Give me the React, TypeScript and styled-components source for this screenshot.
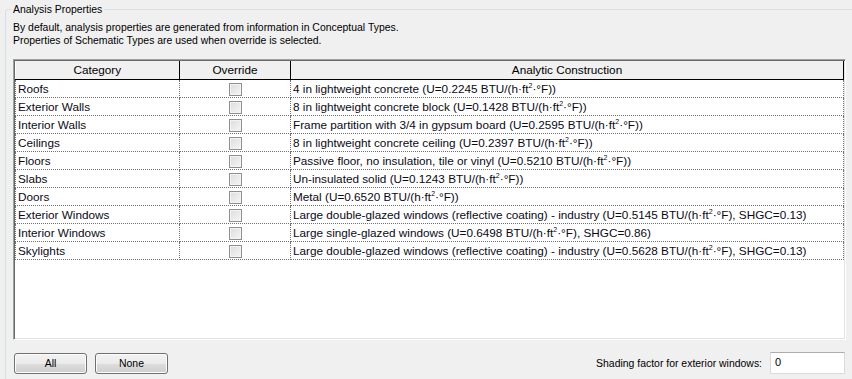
import styled, { createGlobalStyle } from "styled-components"

const FONT = `"Liberation Sans", Arial, sans-serif`

const GlobalStyle = createGlobalStyle`
	html, body {
		margin: 0;
		padding: 0;
		background: #f0f0f0;
		overflow: hidden;
	}
	body {
		font-family: ${FONT};
		font-size: 10.45px;
		color: #000;
	}
`

const Page = styled.div`
	width: 852px;
	height: 379px;
	padding-top: 3px;
	box-sizing: border-box;
	overflow: hidden;
`

const GroupBox = styled.fieldset`
	margin: 0 -20px 0 5px;
	padding: 0 0 0 7px;
	border: 1px solid #d5dfe5;
	border-radius: 3px;
	height: 420px;
	box-sizing: border-box;
`

const Legend = styled.legend`
	padding: 0 2px;
	margin-left: -2px;
	line-height: 13px;
	font-size: 10.45px;
`

const Description = styled.div`
	margin-top: 5px;
	line-height: 13px;
`

const Frame = styled.div`
	margin-top: 12px;
	width: 833px;
	height: 281px;
	box-sizing: border-box;
	background: #fff;
	border-top: 1px solid #a0a0a0;
	border-left: 1px solid #a0a0a0;
	border-right: 1px solid #fff;
	border-bottom: 1px solid #fff;
	box-shadow: inset 1px 1px 0 #696969, inset -1px -1px 0 #e3e3e3;
	padding: 1px;
`

const Grid = styled.table`
	border-collapse: collapse;
	table-layout: fixed;
	width: 828px;
	font-family: ${FONT};
	font-size: 11.75px;
`

const HeadCell = styled.th<{ $w: number }>`
	width: ${({ $w }) => $w}px;
	height: 18px;
	padding: 0;
	background: #f0f0f0;
	font-weight: normal;
	text-align: center;
	border-right: 1px solid #000;
	border-bottom: 1px solid #000;
	box-sizing: border-box;
`

const Cell = styled.td<{ $center?: boolean }>`
	height: 16px;
	padding: 1px 0 0 2px;
	border: 1px dotted #707070;
	white-space: nowrap;
	overflow: hidden;
	text-align: ${({ $center }) => ($center ? "center" : "left")};
	line-height: 15px;
	color: #0a0a14;
`

const Check = styled.span`
	display: inline-block;
	vertical-align: middle;
	width: 11px;
	height: 11px;
	border: 1px solid #8f8f8f;
	background: linear-gradient(135deg, #dcdcdc 0%, #f6f6f6 100%);
	box-shadow: inset 0 0 0 1px #f4f4f4;
	margin: -1px 0 0 -2px;
`

const Sup = styled.sup`
	font-size: 7px;
	line-height: 0;
`

const Footer = styled.div`
	margin-top: 12px;
	width: 832px;
	padding-left: 1px;
	display: flex;
	align-items: center;
	box-sizing: border-box;
`

const Button = styled.button`
	width: 73px;
	height: 21px;
	margin-right: 8px;
	border: 1px solid #707070;
	border-radius: 3px;
	background: linear-gradient(#f2f2f2 0%, #ebebeb 50%, #dddddd 51%, #cfcfcf 100%);
	box-shadow: inset 0 0 0 1px #fcfcfc;
	font-family: ${FONT};
	font-size: 10.45px;
	color: #000;
	padding: 0;
`

const Spacer = styled.div`
	flex: 1;
`

const Label = styled.span`
	margin-right: 8px;
`

const TextBox = styled.div`
	width: 75px;
	height: 22px;
	box-sizing: border-box;
	background: #fff;
	border: 1px solid #dadada;
	border-top-color: #abadb3;
	padding: 2px 0 0 4px;
	line-height: 15px;
	font-size: 11px;
`

const UValue = ({ v, shgc }: { v: string; shgc?: string }) => (
	<>
		(U={v} BTU/(h·ft<Sup>2</Sup>·°F){shgc ? `, SHGC=${shgc})` : ")"}
	</>
)

const rows: { name: string; text: string; u: string; shgc?: string }[] = [
	{ name: "Roofs", text: "4 in lightweight concrete ", u: "0.2245" },
	{ name: "Exterior Walls", text: "8 in lightweight concrete block ", u: "0.1428" },
	{ name: "Interior Walls", text: "Frame partition with 3/4 in gypsum board ", u: "0.2595" },
	{ name: "Ceilings", text: "8 in lightweight concrete ceiling ", u: "0.2397" },
	{ name: "Floors", text: "Passive floor, no insulation, tile or vinyl ", u: "0.5210" },
	{ name: "Slabs", text: "Un-insulated solid ", u: "0.1243" },
	{ name: "Doors", text: "Metal ", u: "0.6520" },
	{
		name: "Exterior Windows",
		text: "Large double-glazed windows (reflective coating) - industry ",
		u: "0.5145",
		shgc: "0.13",
	},
	{ name: "Interior Windows", text: "Large single-glazed windows ", u: "0.6498", shgc: "0.86" },
	{
		name: "Skylights",
		text: "Large double-glazed windows (reflective coating) - industry ",
		u: "0.5628",
		shgc: "0.13",
	},
]

export default function App() {
	return (
		<Page>
			<GlobalStyle />
			<GroupBox>
				<Legend>Analysis Properties</Legend>
				<Description>
					By default, analysis properties are generated from information in Conceptual Types.
					<br />
					Properties of Schematic Types are used when override is selected.
				</Description>
				<Frame>
					<Grid>
						<thead>
							<tr>
								<HeadCell $w={164}>Category</HeadCell>
								<HeadCell $w={111}>Override</HeadCell>
								<HeadCell $w={553}>Analytic Construction</HeadCell>
							</tr>
						</thead>
						<tbody>
							{rows.map((r) => (
								<tr key={r.name}>
									<Cell>{r.name}</Cell>
									<Cell $center>
										<Check />
									</Cell>
									<Cell>
										{r.text}
										<UValue v={r.u} shgc={r.shgc} />
									</Cell>
								</tr>
							))}
						</tbody>
					</Grid>
				</Frame>
				<Footer>
					<Button>All</Button>
					<Button>None</Button>
					<Spacer />
					<Label>Shading factor for exterior windows:</Label>
					<TextBox>0</TextBox>
				</Footer>
			</GroupBox>
		</Page>
	)
}
